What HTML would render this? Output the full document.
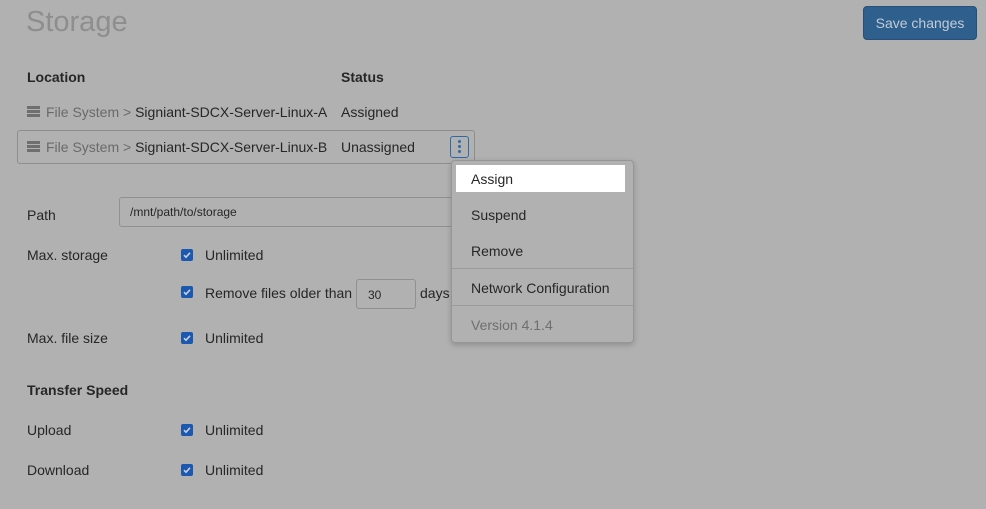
<!DOCTYPE html>
<html><head><meta charset="utf-8"><style>
html,body{margin:0;padding:0;}
body{width:986px;height:509px;background:#b1b1b1;font-family:"Liberation Sans",Arial,sans-serif;color:#262626;position:relative;overflow:hidden;font-size:14px;}
.a{position:absolute;white-space:nowrap;}
.b{font-weight:bold;}
.g{color:#6a6a6a;}
.cb{position:absolute;width:12px;height:12px;background:#1c58b0;border-radius:2px;}
.cb svg{position:absolute;left:1px;top:1px;}
.srv{position:absolute;width:13px;height:11px;}
.srv i{display:block;height:3px;background:#6f6f6f;margin-bottom:1px;}
.menu{position:absolute;left:451px;top:160px;width:181px;height:181px;background:#b1b1b1;border:1px solid #969696;border-radius:4px;box-shadow:0 2px 6px rgba(0,0,0,.2);}
.menu div{position:absolute;left:19px;}
.sep{left:0!important;width:181px;height:1px;background:#9b9b9b;}
</style></head><body>
<div class="a" style="left:26px;top:6px;font-size:29px;color:#8e8e8e;">Storage</div>
<div class="a" style="left:863px;top:6px;width:114px;height:34px;background:#2e5f8d;border:1px solid #274f77;border-radius:4px;box-sizing:border-box;color:#c2cbd5;font-size:14px;text-align:center;line-height:32px;">Save changes</div>

<div class="a b" style="left:27px;top:69px;">Location</div>
<div class="a b" style="left:341px;top:69px;">Status</div>

<div class="srv" style="left:27px;top:106px;"><i></i><i></i><i></i></div>
<div class="a" style="left:46px;top:104px;"><span class="g">File System &gt; </span>Signiant-SDCX-Server-Linux-A</div>
<div class="a" style="left:341px;top:104px;">Assigned</div>

<div class="a" style="left:17px;top:130px;width:458px;height:34px;border:1px solid #8e8e8e;border-radius:3px;box-sizing:border-box;"></div>
<div class="srv" style="left:27px;top:141px;"><i></i><i></i><i></i></div>
<div class="a" style="left:46px;top:139px;"><span class="g">File System &gt; </span>Signiant-SDCX-Server-Linux-B</div>
<div class="a" style="left:341px;top:139px;">Unassigned</div>
<div class="a" style="left:450px;top:136px;width:19px;height:22px;border:1px solid #2e6aa8;border-radius:3px;box-sizing:border-box;"></div>
<div class="a" style="left:458px;top:140px;width:3px;height:3px;border-radius:2px;background:#2e6aa8;"></div>
<div class="a" style="left:458px;top:145px;width:3px;height:3px;border-radius:2px;background:#2e6aa8;"></div>
<div class="a" style="left:458px;top:150px;width:3px;height:3px;border-radius:2px;background:#2e6aa8;"></div>

<div class="a" style="left:27px;top:207px;">Path</div>
<div class="a" style="left:119px;top:197px;width:340px;height:30px;border:1px solid #909090;border-radius:3px;box-sizing:border-box;font-size:12px;padding:7px 0 0 10px;">/mnt/path/to/storage</div>

<div class="a" style="left:27px;top:247px;">Max. storage</div>
<div class="cb" style="left:181px;top:249px;"><svg width="10" height="10" viewBox="0 0 10 10"><path d="M2 5.2L4 7.2L8 2.8" stroke="#c8d0dc" stroke-width="1.6" fill="none"/></svg></div>
<div class="a" style="left:205px;top:247px;">Unlimited</div>

<div class="cb" style="left:181px;top:286px;"><svg width="10" height="10" viewBox="0 0 10 10"><path d="M2 5.2L4 7.2L8 2.8" stroke="#c8d0dc" stroke-width="1.6" fill="none"/></svg></div>
<div class="a" style="left:205px;top:285px;">Remove files older than</div>
<div class="a" style="left:356px;top:279px;width:60px;height:30px;border:1px solid #909090;border-radius:3px;box-sizing:border-box;font-size:12px;padding:8px 0 0 11px;">30</div>
<div class="a" style="left:420px;top:285px;">days</div>

<div class="a" style="left:27px;top:330px;">Max. file size</div>
<div class="cb" style="left:181px;top:332px;"><svg width="10" height="10" viewBox="0 0 10 10"><path d="M2 5.2L4 7.2L8 2.8" stroke="#c8d0dc" stroke-width="1.6" fill="none"/></svg></div>
<div class="a" style="left:205px;top:330px;">Unlimited</div>

<div class="a b" style="left:27px;top:382px;">Transfer Speed</div>
<div class="a" style="left:27px;top:422px;">Upload</div>
<div class="cb" style="left:181px;top:424px;"><svg width="10" height="10" viewBox="0 0 10 10"><path d="M2 5.2L4 7.2L8 2.8" stroke="#c8d0dc" stroke-width="1.6" fill="none"/></svg></div>
<div class="a" style="left:205px;top:422px;">Unlimited</div>
<div class="a" style="left:27px;top:462px;">Download</div>
<div class="cb" style="left:181px;top:464px;"><svg width="10" height="10" viewBox="0 0 10 10"><path d="M2 5.2L4 7.2L8 2.8" stroke="#c8d0dc" stroke-width="1.6" fill="none"/></svg></div>
<div class="a" style="left:205px;top:462px;">Unlimited</div>

<div class="menu">
  <div style="left:4px;top:4px;width:169px;height:27px;background:#fff;"></div>
  <div style="top:10px;">Assign</div>
  <div style="top:46px;">Suspend</div>
  <div style="top:82px;">Remove</div>
  <div class="sep" style="top:107px;"></div>
  <div style="top:119px;">Network Configuration</div>
  <div class="sep" style="top:144px;"></div>
  <div style="top:156px;color:#6f6f6f;">Version 4.1.4</div>
</div>
</body></html>
